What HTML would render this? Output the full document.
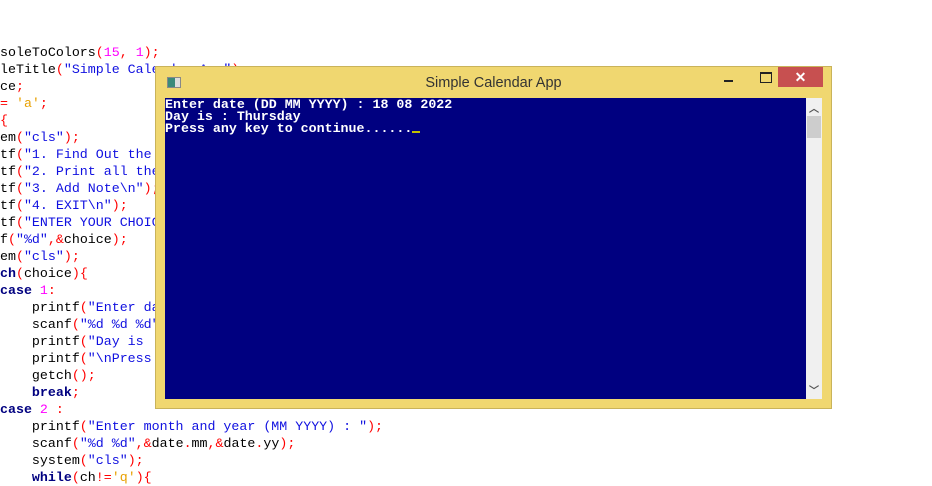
<!DOCTYPE html>
<html><head><style>
body{margin:0;width:932px;height:484px;background:#fff;overflow:hidden;position:relative;font-family:"Liberation Mono",monospace}
.code{position:absolute;left:0;top:44px;font-size:13.3px;line-height:17px;white-space:pre;color:#000}
.k{color:#00f}.s{color:#1010e0}.p{color:#f00}.n{color:#f0f}.c{color:#e8a000}.b{color:#000080;font-weight:bold}
.win{position:absolute;left:155px;top:66px;width:677px;height:343px;background:#f0d770;border:1px solid #c9b35a;box-sizing:border-box}
.title{position:absolute;left:0;right:0;top:8px;text-align:center;font-family:"Liberation Sans",sans-serif;font-size:14.5px;color:#333}
.close{position:absolute;left:622px;top:0;width:45px;height:20px;background:#c75050;color:#fff;text-align:center;font:bold 14px/20px "Liberation Sans",sans-serif}
.con{position:absolute;left:9px;top:31px;width:641px;height:301px;background:#000080;color:#fff;font-weight:bold;font-size:13.3px;line-height:12px;white-space:pre;padding-top:1px;box-sizing:border-box}
.sb{position:absolute;left:650px;top:31px;width:16px;height:301px;background:#f0f0f0}
</style></head><body>
<div class="code">soleToColors<span class="p">(</span><span class="n">15</span><span class="p">,</span> <span class="n">1</span><span class="p">);</span>
leTitle<span class="p">(</span><span class="s">"Simple Calendar App"</span><span class="p">);</span>
ce<span class="p">;</span>
<span class="p">=</span> <span class="c">'a'</span><span class="p">;</span>
<span class="p">{</span>
em<span class="p">(</span><span class="s">"cls"</span><span class="p">);</span>
tf<span class="p">(</span><span class="s">"1. Find Out the</span>
tf<span class="p">(</span><span class="s">"2. Print all the</span>
tf<span class="p">(</span><span class="s">"3. Add Note\n"</span><span class="p">);</span>
tf<span class="p">(</span><span class="s">"4. EXIT\n"</span><span class="p">);</span>
tf<span class="p">(</span><span class="s">"ENTER YOUR CHOICE</span>
f<span class="p">(</span><span class="s">"%d"</span><span class="p">,&amp;</span>choice<span class="p">);</span>
em<span class="p">(</span><span class="s">"cls"</span><span class="p">);</span>
<span class="b">ch</span><span class="p">(</span>choice<span class="p">){</span>
<span class="b">case</span> <span class="n">1</span><span class="p">:</span>
    printf<span class="p">(</span><span class="s">"Enter da</span>
    scanf<span class="p">(</span><span class="s">"%d %d %d"</span>
    printf<span class="p">(</span><span class="s">"Day is </span>
    printf<span class="p">(</span><span class="s">"\nPress </span>
    getch<span class="p">();</span>
    <span class="b">break</span><span class="p">;</span>
<span class="b">case</span> <span class="n">2</span> <span class="p">:</span>
    printf<span class="p">(</span><span class="s">"Enter month and year (MM YYYY) : "</span><span class="p">);</span>
    scanf<span class="p">(</span><span class="s">"%d %d"</span><span class="p">,&amp;</span>date<span class="p">.</span>mm<span class="p">,&amp;</span>date<span class="p">.</span>yy<span class="p">);</span>
    system<span class="p">(</span><span class="s">"cls"</span><span class="p">);</span>
    <span class="b">while</span><span class="p">(</span>ch<span class="p">!=</span><span class="c">'q'</span><span class="p">){</span></div>
<div class="win">
<div style="position:absolute;left:11px;top:10px;width:14px;height:11px;border:1px solid #888;background:linear-gradient(90deg,#3a8a7a 60%,#ddd 60%);box-sizing:border-box"></div>
<div class="title">Simple Calendar App</div>
<div style="position:absolute;left:568px;top:13px;width:9px;height:2px;background:#222"></div>
<div style="position:absolute;left:604px;top:5px;width:10px;height:8px;border:1px solid #222;border-top-width:2px"></div>
<div class="close">✕</div>
<div class="con">Enter date (DD MM YYYY) : 18 08 2022
Day is : Thursday
Press any key to continue......<span style="display:inline-block;width:8px;height:2px;background:#c0c000;vertical-align:-1px"></span></div>
<div class="sb"><div style="position:absolute;top:2px;left:0;width:16px;text-align:center;font:bold 10px 'Liberation Sans';color:#555">︿</div><div style="position:absolute;top:18px;left:1px;width:14px;height:22px;background:#cdcdcd"></div><div style="position:absolute;bottom:2px;left:0;width:16px;text-align:center;font:bold 10px 'Liberation Sans';color:#555">﹀</div></div>
</div>
</body></html>
